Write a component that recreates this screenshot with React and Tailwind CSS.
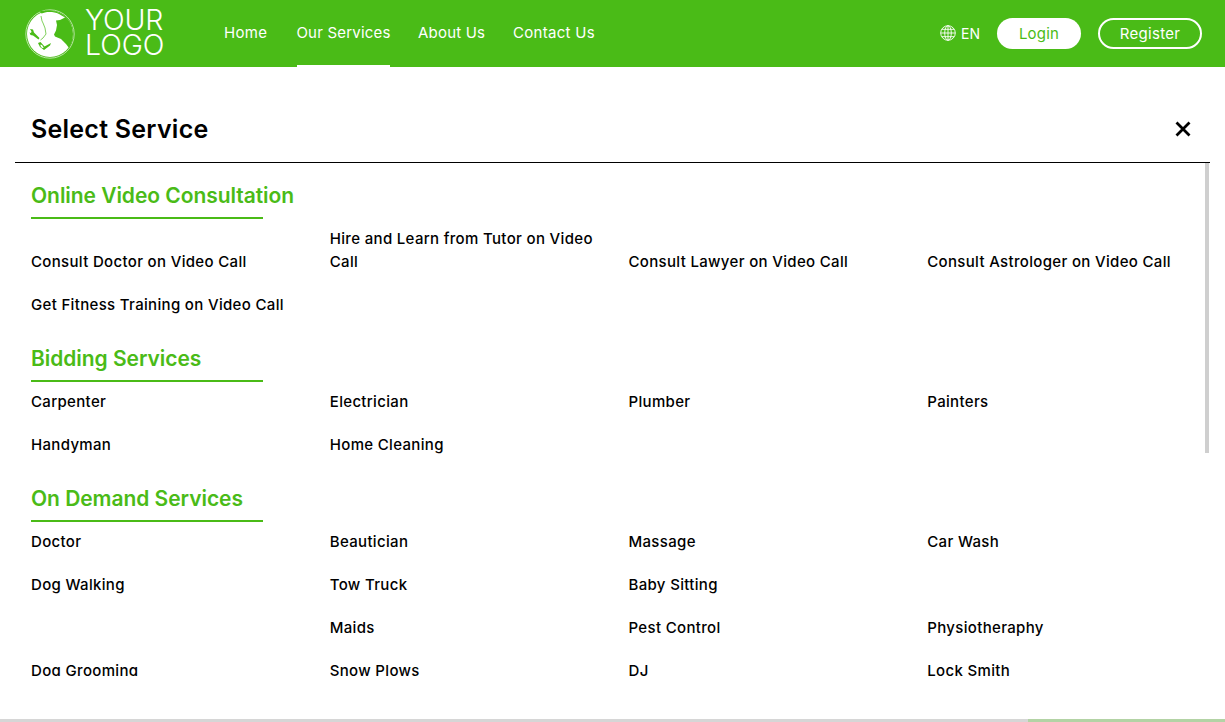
import React from "react";

const sections = [
  {
    title: "Online Video Consultation",
    items: [
      "Consult Doctor on Video Call",
      "Hire and Learn from Tutor on Video Call",
      "Consult Lawyer on Video Call",
      "Consult Astrologer on Video Call",
      "Get Fitness Training on Video Call",
    ],
  },
  {
    title: "Bidding Services",
    items: ["Carpenter", "Electrician", "Plumber", "Painters", "Handyman", "Home Cleaning"],
  },
  {
    title: "On Demand Services",
    items: [
      "Doctor", "Beautician", "Massage", "Car Wash",
      "Dog Walking", "Tow Truck", "Baby Sitting", "",
      "", "Maids", "Pest Control", "Physiotheraphy",
      "Dog Grooming", "Snow Plows", "DJ", "Lock Smith",
    ],
  },
];

function Logo() {
  return (
    <svg width="50" height="50" viewBox="0 0 50 50" className="shrink-0">
      <circle cx="25" cy="25" r="24.200" fill="none" stroke="#ffffff" strokeWidth="0.6" />
      <circle cx="25" cy="25" r="23" fill="#ffffff" />
      <path
        fill="#4abb17"
        d="M15 2.300C18 1.600 22 1.500 25 1.700C38 2 48 12 48 25C48 30 46.500 35 44 39L41 35L36 30L30 27.500L29 25.500L31 21.500L32 16L31 11.500L35 11L40 8.500L34 5C30 3 24 2.500 20 3.500L16.500 4.500L15 2.300Z"
      />
      <path fill="none" stroke="#4abb17" strokeWidth="0.7" d="M16 7L17 12L18 14L20 19L21 25L18 29L15.500 31" />
      <path fill="#4abb17" d="M5 20L8 20.500L9 23.500L14.500 29L13.500 30.500L8 26.500L5.500 26L4.500 23.500L6 24L6.500 22.500Z" />
      <path fill="#4abb17" d="M13 34L15.500 33L19.500 37.500L26 34L25 36.500L19 41L15 38Z" />
      <path fill="#ffffff" d="M15.500 35.500L17 36L18.800 38.800L17 39L15.500 37Z" />
    </svg>
  );
}

function Globe() {
  return (
    <svg width="16" height="16" viewBox="0 0 16 16" fill="none" stroke="#ffffff" strokeWidth="0.9" className="mb-[2px]">
      <circle cx="8" cy="8" r="7.300" />
      <ellipse cx="8" cy="8" rx="3.300" ry="7.300" />
      <path d="M8 .7v14.600M.7 8h14.600M1.800 4.300h12.400M1.800 11.700h12.400" />
    </svg>
  );
}

export default function App() {
  return (
    <div className="relative h-[722px] w-[1225px] overflow-hidden bg-white font-['Inter','Liberation_Sans',sans-serif] text-black">
      <header className="flex h-[67px] items-center bg-[#4abb17] pl-[25px] pr-[23px] text-white">
        <div className="flex w-[199px] items-center gap-[10px]">
          <Logo />
          <div className="pb-[3px] text-[28.500px] font-light leading-[25px] tracking-[-0.1px]">
            YOUR
            <br />
            LOGO
          </div>
        </div>
        <nav className="flex h-full items-stretch gap-[28px] text-[15px] font-normal tracking-[0.3px]">
          <a className="flex w-[45px] items-center whitespace-nowrap">Home</a>
          <a className="flex w-[93px] items-center justify-center whitespace-nowrap border-b-2 border-white pt-[2px] tracking-[0.2px]">Our Services</a>
          <a className="flex w-[67px] items-center whitespace-nowrap tracking-[0.2px]">About Us</a>
          <a className="flex w-[83px] items-center whitespace-nowrap">Contact Us</a>
        </nav>
        <div className="ml-auto flex items-center">
          <Globe />
          <span className="ml-[5px] text-[14px]">EN</span>
          <button className="ml-[17px] flex h-[31px] w-[84px] items-center justify-center rounded-full bg-white pt-[2px] text-[15px] tracking-[0.2px] text-[#4abb17]">Login</button>
          <button className="ml-[17px] flex h-[31px] w-[104px] items-center justify-center rounded-full border-2 border-white pt-[1px] text-[15px] tracking-[0.3px] text-white">Register</button>
        </div>
      </header>

      <main className="mx-[15px]">
        <div className="flex h-[96px] items-center justify-between border-b border-black pl-[16px] pr-[19px] pt-[28px]">
          <h2 className="text-[25px] font-semibold leading-[30px] tracking-[0.25px]">Select Service</h2>
          <svg width="16" height="16" viewBox="0 0 16 16" stroke="#000000" strokeWidth="2.800">
            <path d="M1.500 1.500l13 13M14.500 1.500l-13 13" />
          </svg>
        </div>
        <div className="h-[513px] overflow-hidden pt-[17px]">
          {sections.map((s) => (
            <section key={s.title} className="mb-[27px]">
              <div className="mx-[16px] mb-[8px] w-[232px] whitespace-nowrap border-b-2 border-[#4abb17] pb-[6px] pt-[1px] text-[21px] font-semibold leading-[30px] tracking-[-0.05px] text-[#4abb17]">
                {s.title}
              </div>
              <div className="grid grid-cols-4 items-end gap-y-[20px]">
                {s.items.map((it, i) => (
                  <div key={i} className="min-h-[23px] px-[16px] text-[15px] font-medium leading-[23px] tracking-[0.33px]">
                    {it}
                  </div>
                ))}
              </div>
            </section>
          ))}
        </div>
      </main>

      <div className="absolute left-[1205px] top-[163px] h-[290px] w-[4px] bg-[#cfcfcf]" />
      <div className="absolute bottom-0 left-0 flex h-[3px] w-full bg-[#d6d6d6]">
        <div className="ml-auto h-full w-[197px] bg-[#b3d3a5]" />
      </div>
    </div>
  );
}
